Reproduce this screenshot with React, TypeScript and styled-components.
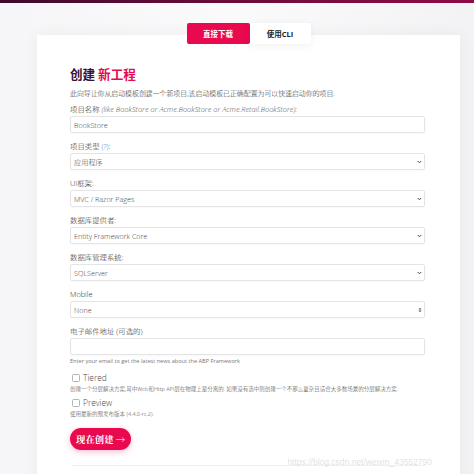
import styled, { createGlobalStyle } from 'styled-components'

const GlobalStyle = createGlobalStyle`
  html, body {
    margin: 0;
    padding: 0;
    background: #f5f5f7;
  }
  body {
    font-family: "Open Sans", "Noto Sans CJK SC", sans-serif;
    color: #333;
  }
`

const Page = styled.div`
  position: relative;
  width: 474px;
  height: 474px;
  overflow: hidden;
  background: linear-gradient(90deg, #f6f6f8 0%, #fafafb 50%, #f3f3f5 100%);
`

const TopBar = styled.div`
  height: 3px;
  background: linear-gradient(90deg, #3d0a2e 0%, #6d0b3c 50%, #8e0c45 100%);
`

const Main = styled.div`
  padding: 20px 14px 0 37px;
  display: flex;
  flex-direction: column;
`

const Tabs = styled.div`
  display: flex;
  justify-content: center;
  margin-bottom: -9px;
  position: relative;
  z-index: 2;
  width: 423px;
`

const Tab = styled.div<{ $active?: boolean }>`
  width: ${p => (p.$active ? '63px' : '61px')};
  height: 21px;
  display: flex;
  align-items: center;
  justify-content: center;
  font-size: 7.5px;
  font-weight: 700;
  background: ${p => (p.$active ? '#e8094f' : '#ffffff')};
  color: ${p => (p.$active ? '#ffffff' : '#222')};
  border-radius: 2px;
  box-shadow: ${p => (p.$active ? 'none' : '0 2px 8px rgba(0,0,0,0.06)')};
`

const Card = styled.div`
  width: 423px;
  background: #fff;
  box-shadow: 0 0 18px rgba(0, 0, 0, 0.05);
  padding: 29px 35px 0 33px;
  box-sizing: border-box;
  height: 460px;
`

const Title = styled.h1`
  margin: 0;
  font-family: "Noto Sans CJK SC", sans-serif;
  font-size: 12.6px;
  line-height: 20px;
  font-weight: 700;
  color: #3a1436;
  span {
    color: #e8094f;
  }
`

const Lead = styled.p`
  margin: 5px 0 5px;
  font-size: 6.9px;
  line-height: 10px;
  font-weight: 300;
  color: #333;
`

const Field = styled.div`
  display: flex;
  flex-direction: column;
  margin-bottom: 8px;
`

const Label = styled.label`
  font-size: 7.4px;
  line-height: 10px;
  font-weight: 300;
  color: #2a2a2a;
  margin-bottom: 2px;
  em {
    font-style: italic;
    color: #555;
  }
  a {
    color: #3a7bd5;
  }
`

const Box = styled.div`
  height: 17px;
  border: 1px solid #e4e4e6;
  border-radius: 2px;
  box-sizing: border-box;
  display: flex;
  align-items: center;
  justify-content: space-between;
  padding: 0 2px 0 3px;
  font-size: 7.2px;
  font-weight: 300;
  color: #444;
  box-shadow: 0 1px 2px rgba(0, 0, 0, 0.03);
`

const Help = styled.div`
  font-size: 5.6px;
  line-height: 8px;
  color: #777;
  margin-top: -6px;
  margin-bottom: 7px;
`

const CheckRow = styled.div`
  display: flex;
  align-items: center;
  gap: 3px;
  height: 11px;
  font-size: 8.4px;
  font-weight: 300;
  color: #444;
  padding-left: 2px;
`

const Check = styled.span`
  width: 6px;
  height: 6px;
  border: 1px solid #b5b5b5;
  border-radius: 1.5px;
`

const Note = styled.div`
  font-size: 5.5px;
  line-height: 8px;
  font-weight: 300;
  color: #444;
  margin: 2px 0 4px;
`

const Button = styled.button`
  margin-top: 6px;
  align-self: flex-start;
  height: 22px;
  padding: 0 6px;
  border: none;
  border-radius: 11px;
  background: #e8094f;
  color: #fff;
  font-family: "Noto Serif CJK SC", "Noto Sans CJK SC", serif;
  font-size: 9.4px;
  font-weight: 700;
  box-shadow: 0 2px 6px rgba(232, 9, 79, 0.25);
`

const Form = styled.div`
  display: flex;
  flex-direction: column;
`

const Footer = styled.div`
  margin-top: 15px;
  border-top: 1px solid #efeff1;
  margin-left: 2px;
`

const Watermark = styled.div`
  position: absolute;
  right: 42px;
  bottom: 7px;
  font-size: 8.5px;
  color: rgba(205, 205, 210, 0.6);
  font-family: "Liberation Sans", sans-serif;
`

function Chevron() {
  return (
    <svg width="5" height="4" viewBox="0 0 10 8">
      <path d="M1.5 2 L5 5.5 L8.5 2" fill="none" stroke="#444" strokeWidth="2" />
    </svg>
  )
}

function UpDown() {
  return (
    <svg width="4" height="6" viewBox="0 0 8 12">
      <path d="M1 5 L4 1.5 L7 5 Z M1 7 L4 10.5 L7 7 Z" fill="#555" />
    </svg>
  )
}

function App() {
  return (
    <Page>
      <GlobalStyle />
      <TopBar />
      <Main>
        <Tabs>
          <Tab $active>直接下载</Tab>
          <Tab>使用CLI</Tab>
        </Tabs>
        <Card>
          <Title>
            创建 <span>新工程</span>
          </Title>
          <Lead>此向导让你从启动模板创建一个新项目,该启动模板已正确配置为可以快速启动你的项目.</Lead>
          <Form>
            <Field>
              <Label>
                项目名称 <em>(like <i>BookStore</i> or <i>Acme.BookStore</i> or <i>Acme.Retail.BookStore</i>):</em>
              </Label>
              <Box>BookStore</Box>
            </Field>
            <Field>
              <Label>
                项目类型 <a>(?)</a>:
              </Label>
              <Box>
                应用程序 <Chevron />
              </Box>
            </Field>
            <Field>
              <Label>UI框架:</Label>
              <Box>
                MVC / Razor Pages <Chevron />
              </Box>
            </Field>
            <Field>
              <Label>数据库提供者:</Label>
              <Box>
                Entity Framework Core <Chevron />
              </Box>
            </Field>
            <Field>
              <Label>数据库管理系统:</Label>
              <Box>
                SQLServer <Chevron />
              </Box>
            </Field>
            <Field>
              <Label>Mobile</Label>
              <Box>
                None <UpDown />
              </Box>
            </Field>
            <Field>
              <Label>电子邮件地址 (可选的)</Label>
              <Box />
            </Field>
            <Help>Enter your email to get the latest news about the ABP Framework</Help>
            <CheckRow>
              <Check />
              Tiered
            </CheckRow>
            <Note>创建一个分层解决方案,其中Web和Http API层在物理上是分离的. 如果没有选中则创建一个不那么复杂且适合大多数场景的分层解决方案.</Note>
            <CheckRow>
              <Check />
              Preview
            </CheckRow>
            <Note>使用最新的预发布版本 (4.4.0-rc.2).</Note>
            <Button>现在创建 →</Button>
          </Form>
          <Footer />
        </Card>
      </Main>
      <Watermark>https://blog.csdn.net/weixin_43552790</Watermark>
    </Page>
  )
}

export default App
